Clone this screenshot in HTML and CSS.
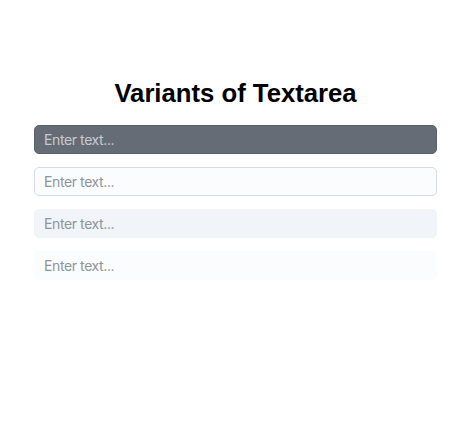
FILE: index.html
```html
<!DOCTYPE html>
<html lang="en">
<head>
<meta charset="utf-8">
<title>Variants of Textarea</title>
<link rel="stylesheet" href="styles.css">
</head>
<body>
<main class="page">
  <h1 class="title">Variants of Textarea</h1>
  <div class="list">
    <textarea class="ta ta-solid" rows="1" placeholder="Enter text..."></textarea>
    <textarea class="ta ta-outline" rows="1" placeholder="Enter text..."></textarea>
    <textarea class="ta ta-filled" rows="1" placeholder="Enter text..."></textarea>
    <textarea class="ta ta-ghost" rows="1" placeholder="Enter text..."></textarea>
  </div>
</main>
</body>
</html>
```
FILE: styles.css
```css
html, body {
  margin: 0;
  padding: 0;
  background: #ffffff;
}
.page {
  padding: 78px 0 0 34px;
  width: 403px;
}
.title {
  margin: 0 0 17px 0;
  font-family: "Liberation Sans", Arial, sans-serif;
  font-weight: 700;
  font-size: 25.7px;
  line-height: 30px;
  text-align: center;
  color: #000;
}
.list {
  display: flex;
  flex-direction: column;
  gap: 13px;
}
.ta {
  display: block;
  box-sizing: border-box;
  width: 100%;
  height: 29px;
  margin: 0;
  padding: 4px 9px;
  font-family: Inter, "Noto Sans", sans-serif;
  font-size: 14px;
  line-height: 20px;
  letter-spacing: -0.4px;
  border-radius: 5px;
  border: 1px solid transparent;
  resize: none;
  overflow: hidden;
  outline: none;
}
.ta-solid {
  background: #656c75;
  border-color: #5a6169;
}
.ta-solid::placeholder { color: #c7cbd0; opacity: 1; }
.ta-outline {
  background: #fbfcfd;
  border-color: #d7dbe1;
}
.ta-outline::placeholder { color: #8f949b; opacity: 1; }
.ta-filled {
  background: #f1f4f8;
  border-color: #f1f4f8;
}
.ta-filled::placeholder { color: #8f949b; opacity: 1; }
.ta-ghost {
  background: #fbfcfd;
  border-color: #fbfcfd;
}
.ta-ghost::placeholder { color: #8f949b; opacity: 1; }
```
